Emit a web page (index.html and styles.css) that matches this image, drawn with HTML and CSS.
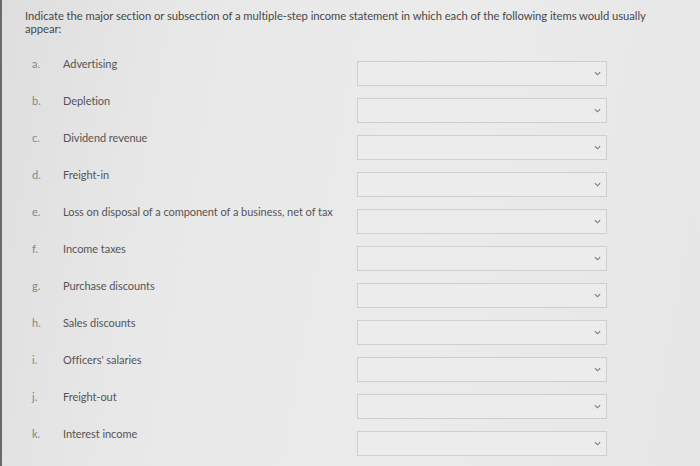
FILE: index.html
```html
<!DOCTYPE html>
<html>
<head>
<meta charset="utf-8">
<link rel="stylesheet" href="styles.css">
</head>
<body>
<div class="page">
  <p class="prompt">Indicate the major section or subsection of a multiple-step income statement in which each of the following items would usually appear:</p>
  <div class="rows">
    <div class="row"><span class="letter">a.</span><span class="item">Advertising</span><div class="select"><svg class="chev" viewBox="0 0 8 5"><path d="M1 1l3 3 3-3"/></svg></div></div>
    <div class="row"><span class="letter">b.</span><span class="item">Depletion</span><div class="select"><svg class="chev" viewBox="0 0 8 5"><path d="M1 1l3 3 3-3"/></svg></div></div>
    <div class="row"><span class="letter">c.</span><span class="item">Dividend revenue</span><div class="select"><svg class="chev" viewBox="0 0 8 5"><path d="M1 1l3 3 3-3"/></svg></div></div>
    <div class="row"><span class="letter">d.</span><span class="item">Freight-in</span><div class="select"><svg class="chev" viewBox="0 0 8 5"><path d="M1 1l3 3 3-3"/></svg></div></div>
    <div class="row"><span class="letter">e.</span><span class="item">Loss on disposal of a component of a business, net of tax</span><div class="select"><svg class="chev" viewBox="0 0 8 5"><path d="M1 1l3 3 3-3"/></svg></div></div>
    <div class="row"><span class="letter">f.</span><span class="item">Income taxes</span><div class="select"><svg class="chev" viewBox="0 0 8 5"><path d="M1 1l3 3 3-3"/></svg></div></div>
    <div class="row"><span class="letter">g.</span><span class="item">Purchase discounts</span><div class="select"><svg class="chev" viewBox="0 0 8 5"><path d="M1 1l3 3 3-3"/></svg></div></div>
    <div class="row"><span class="letter">h.</span><span class="item">Sales discounts</span><div class="select"><svg class="chev" viewBox="0 0 8 5"><path d="M1 1l3 3 3-3"/></svg></div></div>
    <div class="row"><span class="letter">i.</span><span class="item">Officers' salaries</span><div class="select"><svg class="chev" viewBox="0 0 8 5"><path d="M1 1l3 3 3-3"/></svg></div></div>
    <div class="row"><span class="letter">j.</span><span class="item">Freight-out</span><div class="select"><svg class="chev" viewBox="0 0 8 5"><path d="M1 1l3 3 3-3"/></svg></div></div>
    <div class="row"><span class="letter">k.</span><span class="item">Interest income</span><div class="select"><svg class="chev" viewBox="0 0 8 5"><path d="M1 1l3 3 3-3"/></svg></div></div>
  </div>
</div>
</body>
</html>
```
FILE: styles.css
```css
html, body {
  margin: 0;
  padding: 0;
  height: 100%;
}
body {
  background: linear-gradient(100deg, #dedede 0%, #e8e8e8 25%, #ebebeb 60%, #e6e6e6 100%);
  font-family: Lato, "Open Sans", sans-serif;
  overflow: hidden;
}
.page {
  height: 466px;
  box-sizing: border-box;
  border-left: 2px solid #6a6a6a;
  padding: 9px 40px 0 23px;
}
.prompt {
  margin: 0;
  width: 640px;
  font-size: 11.25px;
  line-height: 13px;
  color: #484848;
  letter-spacing: -0.05px;
}
.rows {
  display: flex;
  flex-direction: column;
  margin-top: 22px;
}
.row {
  display: flex;
  align-items: flex-start;
  height: 37px;
  font-size: 11px;
  line-height: 14px;
  color: #555;
}
.letter {
  width: 31px;
  padding-left: 7px;
  color: #858585;
}
.item {
  width: 294px;
  letter-spacing: -0.05px;
}
.select {
  margin-top: 4px;
  width: 243px;
  height: 23px;
  border: 1px solid #cfcfcf;
  background: #ececec;
  display: flex;
  align-items: center;
  justify-content: flex-end;
  padding-right: 5px;
  box-sizing: content-box;
}
.chev {
  width: 7px;
  height: 5px;
  fill: none;
  stroke: #777;
  stroke-width: 1.3;
}
```
